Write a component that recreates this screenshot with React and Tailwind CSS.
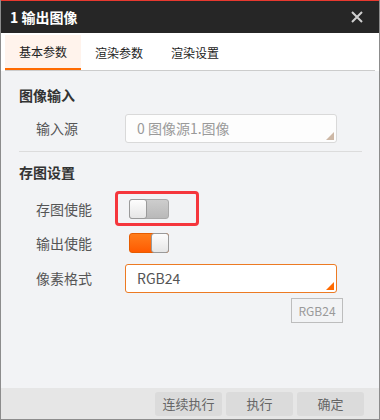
import React from 'react';

const font = { fontFamily: '"Noto Sans CJK SC", "Noto Sans", sans-serif' };

const Toggle = ({ on }) => (
  <div
    className={
      'relative w-[40px] h-[20px] rounded-[3px] border ' +
      (on
        ? 'bg-gradient-to-b from-[#ff7d1a] to-[#ff5a00] border-[#e65c00]'
        : 'bg-gradient-to-b from-[#cdcdcd] to-[#b9b9b9] border-[#a9a9a9]')
    }
  >
    <div
      className={
        'absolute top-[-1px] w-[18px] h-[20px] rounded-[3px] border border-[#9a9a9a] bg-gradient-to-b from-[#fdfdfd] to-[#e6e6e6] ' +
        (on ? 'right-[-1px]' : 'left-[-1px]')
      }
    />
  </div>
);

const Field = ({ value, active }) => (
  <div
    className={
      'relative w-[212px] h-[29px] rounded-[3px] border flex items-center pl-[11px] text-[14px] ' +
      (active ? 'border-[#ec7a23] bg-white text-[#555]' : 'border-[#d9d9d9] bg-[#fdfdfd] text-[#9a9a9a]')
    }
  >
    {value}
    <svg className="absolute right-[2px] bottom-[2px]" width="8" height="8" viewBox="0 0 8 8">
      <polygon points="8,0 8,8 0,8" fill={active ? '#ff6a00' : '#cdb8a6'} />
    </svg>
  </div>
);

const Row = ({ label, className, children }) => (
  <div className={'flex items-center ' + className}>
    <div className="w-[106px] pl-[17px] text-[14px] text-[#555]">{label}</div>
    {children}
  </div>
);

export default function App() {
  return (
    <div style={font} className="w-[380px] h-[420px] flex flex-col bg-[#f2f3f5] border-x border-b border-[#8c8c8c]">
      {/* title bar */}
      <div className="h-[33px] shrink-0 bg-[#262626] border-t border-[#e8392f] flex items-center justify-between pl-[9px] pr-[16px]">
        <span className="text-white text-[14px] font-bold">1 输出图像</span>
        <svg width="12" height="12" viewBox="0 0 12 12">
          <path d="M1 1 L11 11 M11 1 L1 11" stroke="#cfcfcf" strokeWidth="2" />
        </svg>
      </div>

      {/* tabs */}
      <div className="h-[38px] shrink-0 bg-white px-[4px] pt-[2px]">
        <div className="h-full flex border-b border-[#cccccc]">
          <div className="w-[76px] flex items-center justify-center bg-[#fff3ec] border-b-2 border-[#ff6a00] text-[12px] text-[#222]">基本参数</div>
          <div className="w-[76px] flex items-center justify-center text-[12px] text-[#222]">渲染参数</div>
          <div className="w-[76px] flex items-center justify-center text-[12px] text-[#222]">渲染设置</div>
        </div>
      </div>

      {/* content */}
      <div className="flex-1 flex flex-col pl-[18px] pr-[17px]">
        <div className="mt-[14px] h-[20px] leading-[20px] text-[14px] font-bold text-[#333]">图像输入</div>
        <Row label="输入源" className="mt-[9px]">
          <Field value="0 图像源1.图像" />
        </Row>
        <div className="mt-[8px] h-px bg-[#dcdcdc]" />
        <div className="mt-[10px] h-[20px] leading-[20px] text-[14px] font-bold text-[#333]">存图设置</div>

        <Row label="存图使能" className="mt-[17px] h-[20px]">
          <div className="relative ml-[4px]">
            <Toggle on={false} />
            <div className="absolute left-[-14px] top-[-8px] w-[84px] h-[35px] border-[3px] border-[#f5363c] rounded-[4px]" />
          </div>
        </Row>
        <Row label="输出使能" className="mt-[14px] h-[20px]">
          <div className="ml-[4px]">
            <Toggle on={true} />
          </div>
        </Row>
        <Row label="像素格式" className="mt-[11px]">
          <Field value="RGB24" active />
        </Row>
        <div className="mt-[5px] self-end mr-[19px] w-[52px] h-[25px] border border-[#bdbdbd] flex items-center justify-center text-[12px] text-[#9a9a9a]">
          RGB24
        </div>
      </div>

      {/* footer */}
      <div className="h-[31px] shrink-0 bg-[#e6e6e6] flex justify-end items-start gap-[4px] pt-[4px] pr-[15px]">
        <button className="w-[67px] h-[24px] rounded-[3px] bg-[#dbdbdb] text-[13px] text-[#666]">连续执行</button>
        <button className="w-[67px] h-[24px] rounded-[3px] bg-[#dbdbdb] text-[13px] text-[#666]">执行</button>
        <button className="w-[67px] h-[24px] rounded-[3px] bg-[#dbdbdb] text-[13px] text-[#666]">确定</button>
      </div>
    </div>
  );
}
